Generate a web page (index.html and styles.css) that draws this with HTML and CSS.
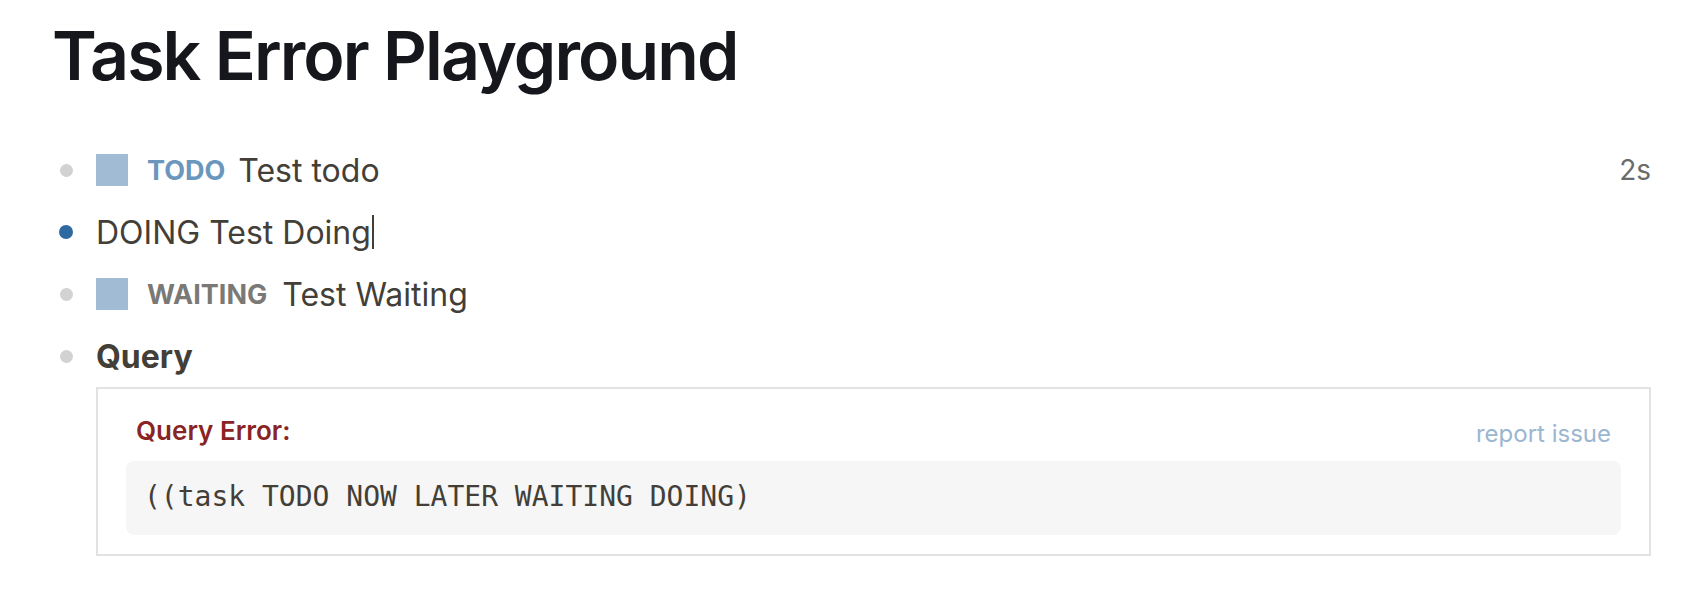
FILE: index.html
```html
<!DOCTYPE html>
<html lang="en">
<head>
<meta charset="utf-8">
<title>Task Error Playground</title>
<link rel="stylesheet" href="styles.css">
</head>
<body>
<div class="page">
  <h1 class="title">Task Error Playground</h1>
  <div class="blocks">
    <div class="block">
      <div class="bullet-wrap"><span class="bullet"></span></div>
      <div class="content">
        <span class="checkbox"></span>
        <span class="marker todo">TODO</span>
        <span class="text">Test todo</span>
        <span class="time">2s</span>
      </div>
    </div>
    <div class="block">
      <div class="bullet-wrap"><span class="bullet active"></span></div>
      <div class="content">
        <span class="text">DOING Test Doing</span><span class="caret"></span>
      </div>
    </div>
    <div class="block">
      <div class="bullet-wrap"><span class="bullet"></span></div>
      <div class="content">
        <span class="checkbox"></span>
        <span class="marker waiting">WAITING</span>
        <span class="text">Test Waiting</span>
      </div>
    </div>
    <div class="block">
      <div class="bullet-wrap"><span class="bullet"></span></div>
      <div class="content">
        <span class="text strong">Query</span>
      </div>
    </div>
    <div class="query-box">
      <div class="query-head">
        <span class="query-error">Query Error:</span>
        <span class="report">report issue</span>
      </div>
      <div class="code">((task TODO NOW LATER WAITING DOING)</div>
    </div>
  </div>
</div>
</body>
</html>
```

FILE: styles.css
```css
html, body {
  margin: 0;
  padding: 0;
  background: #ffffff;
}

body {
  font-family: Inter, "Noto Sans", sans-serif;
  color: #433f38;
}

.page {
  padding: 0 53px 0 52px;
}

.title {
  margin: 0;
  padding-top: 14px;
  font-size: 68px;
  line-height: 82px;
  font-weight: 560;
  letter-spacing: -1.9px;
  color: #15171c;
}

.blocks {
  margin-top: 43px;
}

.block {
  display: flex;
  align-items: center;
  height: 62px;
}

.bullet-wrap {
  width: 28px;
  display: flex;
  justify-content: center;
  align-items: center;
  margin-right: 16px;
}

.bullet {
  width: 13px;
  height: 13px;
  border-radius: 50%;
  background: #d2d2d2;
}

.bullet.active {
  width: 14px;
  height: 14px;
  background: #2e6aa1;
}

.content {
  flex: 1;
  display: flex;
  align-items: center;
  font-size: 32px;
}

.checkbox {
  width: 32px;
  height: 32px;
  background: #a1bbd4;
  margin-right: 19px;
}

.marker {
  font-size: 27px;
  font-weight: 700;
  margin-right: 13px;
}

.marker.todo {
  color: #6b96be;
}

.marker.waiting {
  color: #7a7975;
  margin-right: 15px;
}

.text {
  white-space: pre;
}

.text.strong {
  font-weight: 700;
}

.caret {
  display: inline-block;
  width: 2px;
  height: 34px;
  background: #433f38;
  margin-left: 1px;
}

.time {
  margin-left: auto;
  font-size: 28px;
  color: #6b6b6b;
}

.query-box {
  margin: 0 0 0 44px;
  border: 2px solid #e2e2e2;
  padding: 20px 28px 19px 28px;
}

.query-head {
  display: flex;
  justify-content: space-between;
  align-items: flex-start;
  padding: 0 10px;
  height: 52px;
}

.query-error {
  font-size: 26px;
  line-height: 32px;
  margin-top: 6px;
  font-weight: 600;
  color: #8a2424;
}

.report {
  font-size: 24px;
  line-height: 32px;
  margin-top: 9px;
  color: #9bb6d0;
}

.code {
  background: #f6f6f6;
  border-radius: 8px;
  height: 74px;
  box-sizing: border-box;
  display: flex;
  align-items: center;
  padding: 0 18px 4px 18px;
  font-family: "DejaVu Sans Mono", "Liberation Mono", monospace;
  font-size: 28px;
  color: #433f38;
  white-space: pre;
}
```
